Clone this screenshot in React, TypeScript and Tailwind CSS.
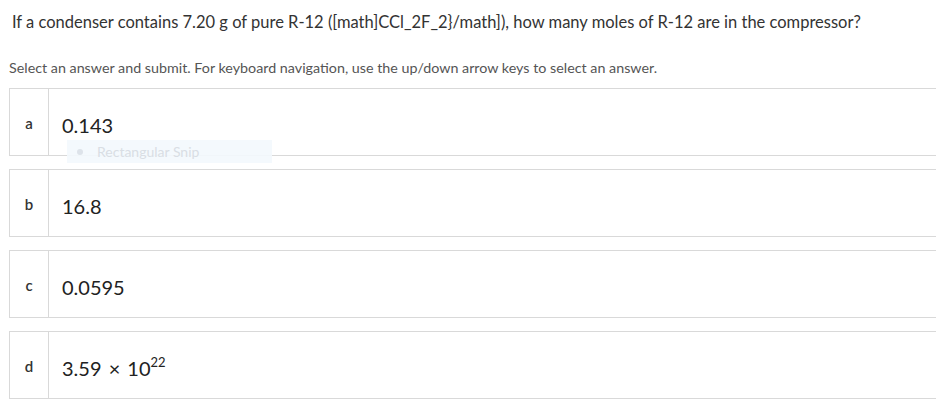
import type { ReactNode } from 'react';

interface Choice {
  letter: string;
  value: ReactNode;
}

const question =
  'If a condenser contains 7.20 g of pure R-12 ([math]CCl_2F_2}/math]), how many moles of R-12 are in the compressor?';

const choices: Choice[] = [
  { letter: 'a', value: '0.143' },
  { letter: 'b', value: '16.8' },
  { letter: 'c', value: '0.0595' },
  {
    letter: 'd',
    value: (
      <span>
        3.59 <span className="mx-[2px]">×</span> 10
        <sup className="text-[13px] -top-[9px]">22</sup>
      </span>
    ),
  },
];

function ChoiceRow({ choice }: { choice: Choice }) {
  return (
    <div className="flex h-[68px] w-[940px] border border-[#d9d9d9] bg-white">
      <div className="flex w-[39px] shrink-0 items-center justify-center border-r border-[#d9d9d9] pt-[2px] text-[15px] font-semibold text-[#333]">
        {choice.letter}
      </div>
      <div className="flex items-center pl-[13px] pt-[6px] text-[20px] text-[#222] font-['Lato',sans-serif]">
        {choice.value}
      </div>
    </div>
  );
}

export default function App() {
  return (
    <div className="relative h-[405px] w-[936px] overflow-hidden bg-white font-['Lato','Open_Sans',sans-serif]">
      <div className="pl-[12px] pt-[10px] text-[16.5px] leading-[24px] text-[#333]">{question}</div>
      <div className="pl-[9px] pt-[24px] text-[14.3px] leading-[20px] text-[#555]">
        Select an answer and submit. For keyboard navigation, use the up/down arrow keys to select an answer.
      </div>

      <div className="mt-[10px] flex flex-col gap-[13px] pl-[9px]">
        {choices.map((c) => (
          <ChoiceRow key={c.letter} choice={c} />
        ))}
      </div>

      {/* faint snipping tool tooltip left over on the screenshot */}
      <div className="absolute left-[67px] top-[140px] flex h-[23px] w-[205px] items-center gap-[14px] bg-[#f3f8fd]/90 pl-[10px] text-[14px] text-[#d9dee4]">
        <span className="h-[6px] w-[6px] rounded-full bg-[#dde3ea]" />
        <span>Rectangular Snip</span>
      </div>
    </div>
  );
}
